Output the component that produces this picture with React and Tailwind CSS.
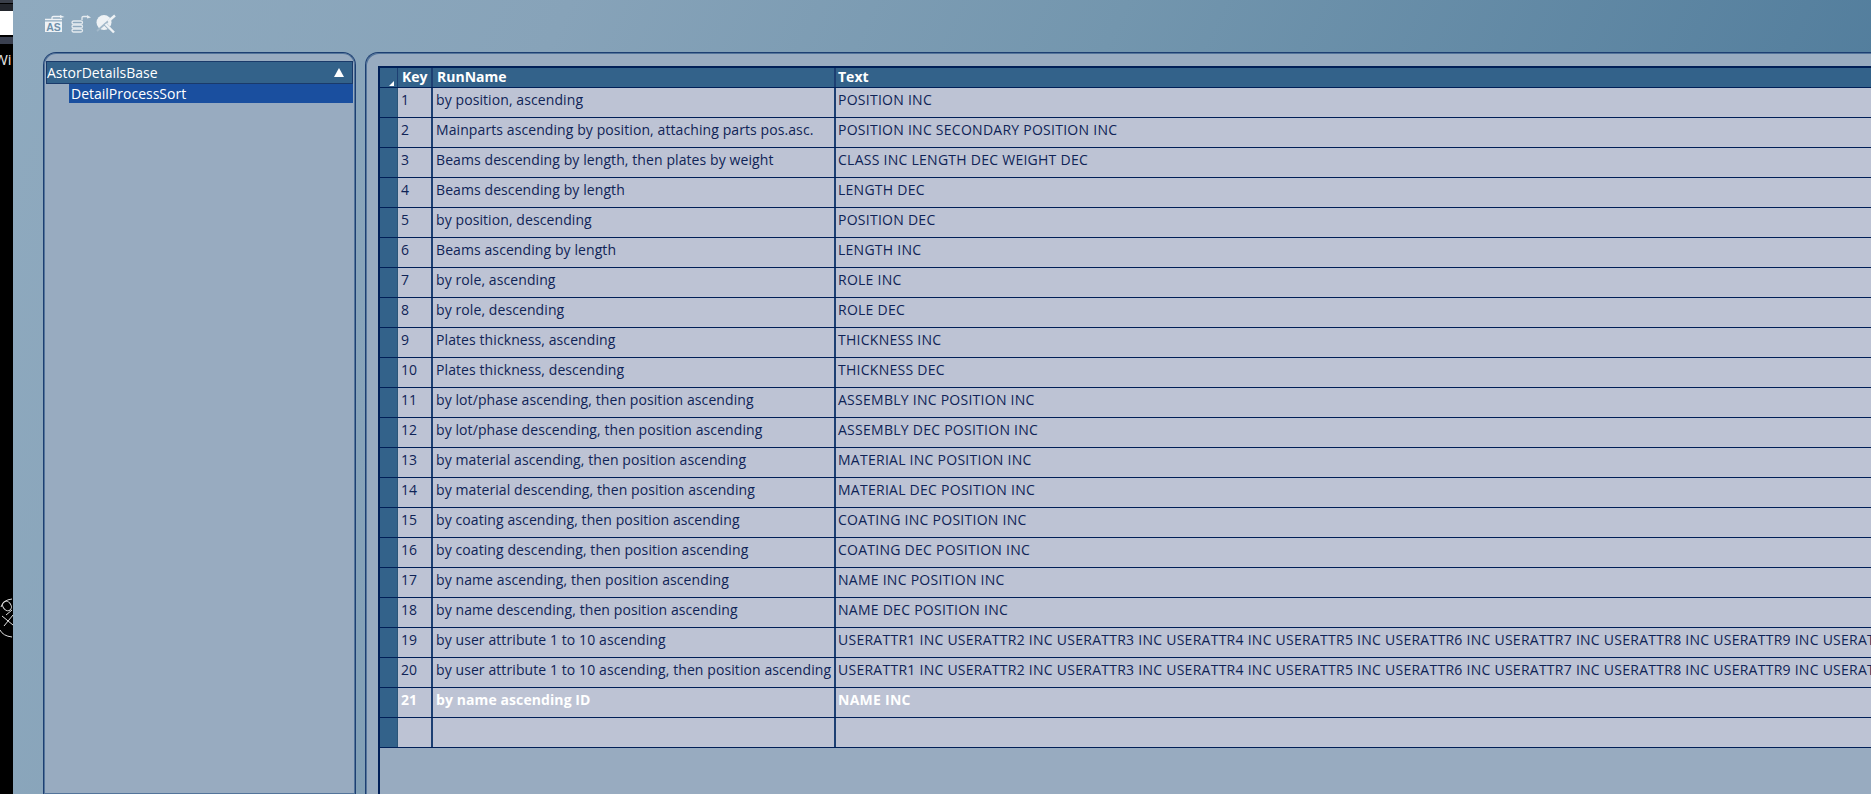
const rows = [
  ["1", "by position, ascending", "POSITION INC"],
  ["2", "Mainparts ascending by position, attaching parts pos.asc.", "POSITION INC SECONDARY POSITION INC"],
  ["3", "Beams descending by length, then plates by weight", "CLASS INC LENGTH DEC WEIGHT DEC"],
  ["4", "Beams descending by length", "LENGTH DEC"],
  ["5", "by position, descending", "POSITION DEC"],
  ["6", "Beams ascending by length", "LENGTH INC"],
  ["7", "by role, ascending", "ROLE INC"],
  ["8", "by role, descending", "ROLE DEC"],
  ["9", "Plates thickness, ascending", "THICKNESS INC"],
  ["10", "Plates thickness, descending", "THICKNESS DEC"],
  ["11", "by lot/phase ascending, then position ascending", "ASSEMBLY INC POSITION INC"],
  ["12", "by lot/phase descending, then position ascending", "ASSEMBLY DEC POSITION INC"],
  ["13", "by material ascending, then position ascending", "MATERIAL INC POSITION INC"],
  ["14", "by material descending, then position ascending", "MATERIAL DEC POSITION INC"],
  ["15", "by coating ascending, then position ascending", "COATING INC POSITION INC"],
  ["16", "by coating descending, then position ascending", "COATING DEC POSITION INC"],
  ["17", "by name ascending, then position ascending", "NAME INC POSITION INC"],
  ["18", "by name descending, then position ascending", "NAME DEC POSITION INC"],
  ["19", "by user attribute 1 to 10 ascending", "USERATTR1 INC USERATTR2 INC USERATTR3 INC USERATTR4 INC USERATTR5 INC USERATTR6 INC USERATTR7 INC USERATTR8 INC USERATTR9 INC USERATTR10 INC"],
  ["20", "by user attribute 1 to 10 ascending, then position ascending", "USERATTR1 INC USERATTR2 INC USERATTR3 INC USERATTR4 INC USERATTR5 INC USERATTR6 INC USERATTR7 INC USERATTR8 INC USERATTR9 INC USERATTR10 INC"],
  ["21", "by name ascending ID", "NAME INC", true],
  ["", "", ""],
];

const Toolbar = () => {
  return (
    <div className="flex h-[52px] items-start gap-[5px] pl-[32px] pt-[14px]">
      <svg width="21" height="20" viewBox="0 0 21 20" fill="none" stroke="#eef2f6">
        <path d="M0 5.500h17" strokeWidth="1.500" />
        <path d="M7 5V3.500Q7 2.500 8.500 2.500H15" strokeWidth="1.300" />
        <path d="M15 1l4.500 2-4.500 1z" fill="#eef2f6" stroke="none" />
        <rect x="0" y="7.500" width="17" height="10.500" fill="#eef2f6" stroke="none" />
        <text x="8.500" y="16.500" textAnchor="middle" fontSize="10.500" fontWeight="700" fill="#6f90aa" stroke="none" fontFamily="Liberation Sans, sans-serif">AS</text>
      </svg>
      <svg width="20" height="20" viewBox="0 0 20 20" fill="none" stroke="#e4eaef" strokeWidth="1.300">
        <rect x="1" y="7" width="10.500" height="3" rx="1.500" />
        <rect x="1" y="11" width="10.500" height="3" rx="1.500" />
        <rect x="1" y="15" width="10.500" height="3" rx="1.500" />
        <path d="M11 6V3.500Q11 2.500 12.500 2.500H16" />
        <path d="M16 1l4 2.500-4 1z" fill="#e4eaef" stroke="none" />
      </svg>
      <svg width="20" height="20" viewBox="0 0 20 20" fill="none">
        <circle cx="8" cy="8.500" r="7.500" fill="#eef2f5" />
        <path d="M18 2L1 17" stroke="#a3b9ca" strokeWidth="1.700" />
        <path d="M19 1.500L12 7.500" stroke="#eef2f5" strokeWidth="2.400" />
        <path d="M9 10L14 15" stroke="#9cb3c5" strokeWidth="3.500" />
        <path d="M9.500 10L18 18.500" stroke="#eef2f5" strokeWidth="2.400" />
      </svg>
    </div>
  );
};

const Row = ({ row }) => {
  const color = row[3] ? "font-bold text-white" : "text-[#0f2356]";
  return (
    <div className={"flex h-[30px] border-b border-[#001f57] leading-[24px] " + color}>
      <div className="w-[18px] shrink-0 border-r border-[#2a5578] bg-[#33628a]" />
      <div className="w-[35px] shrink-0 border-r-2 border-[#1d3f72] bg-[#bdc3d4] pl-[3px]">{row[0]}</div>
      <div className="w-[403px] shrink-0 border-r-2 border-[#1d3f72] bg-[#bdc3d4] pl-[3px] tracking-[0.09px]">{row[1]}</div>
      <div className="flex-1 overflow-hidden whitespace-nowrap bg-[#bdc3d4] pl-[2px] tracking-[0.26px]">{row[2]}</div>
    </div>
  );
};

const App = () => {
  return (
    <div className="flex h-[794px] w-[1871px] overflow-hidden bg-black text-[14px] font-['Open_Sans',sans-serif]">
      <aside className="relative w-[13px] shrink-0 overflow-hidden bg-black">
        <div className="h-[3px] bg-[#3a3f4a]" />
        <div className="h-[1px] bg-black" />
        <div className="h-[7px] bg-[#23262d]" />
        <div className="h-[24px] bg-white" />
        <div className="h-[2px] bg-black" />
        <div className="h-[7px] bg-[#3a4050]" />
        <div className="mt-[4px] -ml-[6px] whitespace-nowrap text-[15px] text-[#e4e4e4]">Wi</div>
        <svg className="absolute left-0 top-[596px]" width="13" height="42" viewBox="0 0 13 42" fill="none" stroke="#e0e0e0" strokeWidth="1">
          <path d="M12 3Q3 4 1 11" />
          <path d="M0 34Q3 40 12 41" />
          <ellipse cx="7" cy="10" rx="4" ry="5" transform="rotate(-35 7 10)" />
          <path d="M2 20L13 29M4 30L13 19M12 14L6 19" />
        </svg>
      </aside>
      <main className="flex min-w-0 flex-1 flex-col bg-[linear-gradient(115deg,#8faabf_0%,#87a3b9_25%,#7396ae_50%,#537e9d_85%,#4a7596_100%)]">
        <Toolbar />
        <div className="flex min-h-0 flex-1 gap-[9px] pl-[30px]">
          <section className="w-[313px] shrink-0 rounded-t-[13px] border border-b-0 border-[#1d3f72] bg-[#98abc0] px-[2px] pt-[8px] shadow-[inset_0_0_0_1px_#53749a]">
            <div className="flex h-[23px] items-center justify-between border border-[#1a3a6a] bg-[#33628a] pr-[8px] text-white">
              <span>AstorDetailsBase</span>
              <span className="h-0 w-0 border-x-[5px] border-b-[9px] border-x-transparent border-b-white" />
            </div>
            <div className="ml-[23px] flex h-[19px] items-center bg-[#1a4f9f] pl-[2px] text-white">DetailProcessSort</div>
          </section>
          <section className="min-w-0 flex-1 rounded-tl-[13px] border-l border-t border-[#1d3f72] bg-[#98abc0] pl-[12px] pt-[13px] shadow-[inset_1px_1px_0_0_#53749a]">
            <div className="h-full border-l-2 border-t-2 border-[#001f57]">
              <div className="flex h-[20px] border-b border-[#001f57] bg-[#33628a] font-bold leading-[18px] text-white">
                <div className="relative w-[18px] shrink-0 border-r border-[#1d3f72]">
                  <span className="absolute bottom-[1px] right-[3px] h-0 w-0 border-b-[5px] border-l-[5px] border-b-white border-l-transparent" />
                </div>
                <div className="w-[35px] shrink-0 border-r-2 border-[#1d3f72] pl-[4px]">Key</div>
                <div className="w-[403px] shrink-0 border-r-2 border-[#1d3f72] pl-[4px]">RunName</div>
                <div className="flex-1 pl-[2px]">Text</div>
              </div>
              {rows.map((row, i) => (
                <Row key={i} row={row} />
              ))}
            </div>
          </section>
        </div>
      </main>
    </div>
  );
};

export default App;
